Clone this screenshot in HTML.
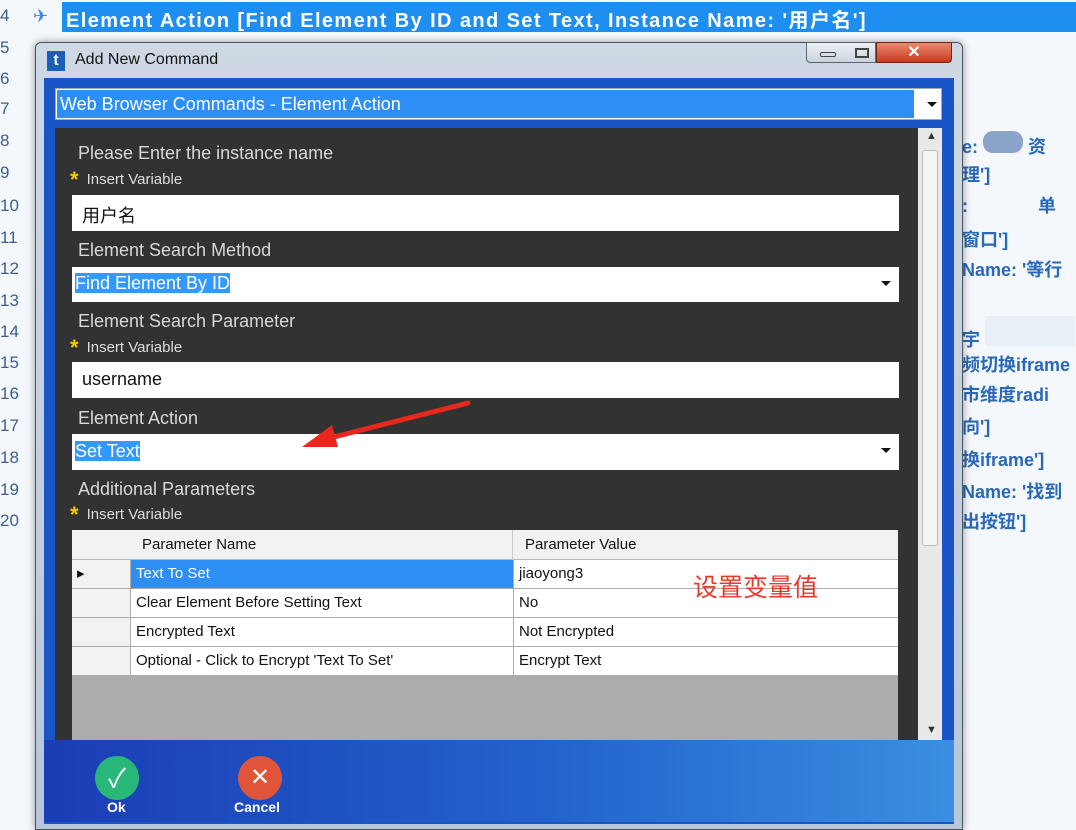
<!DOCTYPE html>
<html><head><meta charset="utf-8"><style>
*{margin:0;padding:0;box-sizing:border-box}
body{width:1076px;height:830px;overflow:hidden;background:#f4f7fb;font-family:"Liberation Sans","Noto Sans CJK SC",sans-serif;position:relative}
.a{position:absolute}
.ln{position:absolute;left:0;width:22px;font-size:17px;color:#3a5f8f}
.rt{position:absolute;left:962px;font-size:18px;color:#2a68b8;font-weight:bold;white-space:nowrap}
.lbl{position:absolute;left:78px;color:#d8d8d8;font-size:18px}
.iv{position:absolute;left:70px;color:#ddd;font-size:15px}
.iv b{color:#f5c800;font-size:22px;margin-right:8px;vertical-align:-3px}
.inp{position:absolute;left:72px;width:827px;background:#fff;font-size:18px;color:#111}
.sel{background:#3399ff;color:#fff}
.dd{position:absolute;right:8px;top:14px;border-left:5px solid transparent;border-right:5px solid transparent;border-top:5px solid #111}
.row{position:absolute;left:72px;width:826px;height:29px;font-size:15px;color:#111}
.row div{position:absolute;top:0;height:28px;line-height:28px;background:#fff;padding-left:5px}
</style></head><body>
<div class="a" style="left:62px;top:2px;width:1014px;height:30px;background:#1e8ff0"></div>
<div class="a" style="left:66px;top:4px;font-size:20px;font-weight:bold;color:#fff;white-space:nowrap;letter-spacing:1.4px">Element Action [Find Element By ID and Set Text, Instance Name: '用户名']</div>
<div class="a" style="left:33px;top:6px;font-size:18px;color:#3a8ad8">✈</div>
<div class="ln" style="top:6px">4</div><div class="ln" style="top:38px">5</div><div class="ln" style="top:69px">6</div><div class="ln" style="top:99px">7</div><div class="ln" style="top:131px">8</div><div class="ln" style="top:163px">9</div><div class="ln" style="top:196px">10</div><div class="ln" style="top:228px">11</div><div class="ln" style="top:259px">12</div><div class="ln" style="top:291px">13</div><div class="ln" style="top:322px">14</div><div class="ln" style="top:353px">15</div><div class="ln" style="top:384px">16</div><div class="ln" style="top:416px">17</div><div class="ln" style="top:448px">18</div><div class="ln" style="top:480px">19</div><div class="ln" style="top:511px">20</div>
<div class="rt" style="top:131px">e: <span style="display:inline-block;width:40px;height:22px;background:#8aa3c8;border-radius:10px"></span> 资</div>
<div class="rt" style="top:161px">理']</div>
<div class="rt" style="top:192px">: <span style="display:inline-block;width:60px"></span> 单</div>
<div class="rt" style="top:226px">窗口']</div>
<div class="rt" style="top:256px">Name: '等行</div>
<div class="rt" style="top:316px">宇 <span style="display:inline-block;width:90px;height:30px;background:#e9eff7"></span></div>
<div class="rt" style="top:351px">频切换iframe</div>
<div class="rt" style="top:381px">市维度radi</div>
<div class="rt" style="top:413px">向']</div>
<div class="rt" style="top:446px">换iframe']</div>
<div class="rt" style="top:478px">Name: '找到</div>
<div class="rt" style="top:508px">出按钮']</div>
<div class="a" style="left:35px;top:42px;width:928px;height:788px;background:linear-gradient(#cfd9e4,#b7c7d8);border:1px solid #4a5560;border-radius:6px 6px 0 0;box-shadow:0 0 8px rgba(0,0,0,.4)"></div>
<div class="a" style="left:47px;top:51px;width:18px;height:20px;background:#1a5fb8;color:#fff;font-weight:bold;font-size:16px;text-align:center;line-height:20px">t</div>
<div class="a" style="left:75px;top:51px;font-size:16px;color:#111">Add New Command</div>
<div class="a" style="left:806px;top:42px;width:70px;height:21px;background:linear-gradient(#eef2f6,#c9d3dd);border:1px solid #5a6470;border-radius:0 0 0 4px"></div>
<div class="a" style="left:820px;top:52px;width:16px;height:5px;border:1px solid #444;border-radius:2px"></div>
<div class="a" style="left:855px;top:48px;width:14px;height:10px;border:2px solid #444"></div>
<div class="a" style="left:876px;top:42px;width:76px;height:21px;background:linear-gradient(#e88a70,#c8391e);border:1px solid #6a2a1a;border-radius:0 0 4px 0;color:#fff;text-align:center;font-weight:bold;font-size:16px;line-height:19px">✕</div>
<div class="a" style="left:44px;top:78px;width:910px;height:746px;background:#1a55c8"></div>
<div class="a" style="left:55px;top:88px;width:887px;height:32px;background:#fff;border:1px solid #9ab"></div>
<div class="a" style="left:57px;top:90px;width:857px;height:28px;background:#2d8ff5;color:#fff;font-size:18px;line-height:28px;padding-left:3px">Web Browser Commands - Element Action</div>
<div class="dd" style="left:927px;top:102px;right:auto"></div>
<div class="a" style="left:55px;top:128px;width:863px;height:612px;background:#323232"></div>
<div class="a" style="left:918px;top:128px;width:24px;height:612px;background:#e8e8e8"></div>
<div class="a" style="left:922px;top:150px;width:16px;height:396px;background:#f4f4f4;border:1px solid #bbb;border-radius:3px"></div>
<div class="a" style="left:926px;top:130px;font-size:11px;color:#333">▲</div>
<div class="a" style="left:926px;top:724px;font-size:11px;color:#333">▼</div>
<div class="lbl" style="top:143px">Please Enter the instance name</div>
<div class="iv" style="top:167px"><b>*</b>Insert Variable</div>
<div class="inp" style="top:195px;height:36px;padding:7px 10px">用户名</div>
<div class="lbl" style="top:240px">Element Search Method</div>
<div class="inp" style="top:267px;height:35px;padding:6px 3px"><span class="sel">Find Element By ID</span><div class="dd"></div></div>
<div class="lbl" style="top:311px">Element Search Parameter</div>
<div class="iv" style="top:335px"><b>*</b>Insert Variable</div>
<div class="inp" style="top:362px;height:36px;padding:7px 10px">username</div>
<div class="lbl" style="top:408px">Element Action</div>
<div class="inp" style="top:434px;height:36px;padding:7px 3px"><span class="sel">Set Text</span><div class="dd"></div></div>
<div class="lbl" style="top:479px">Additional Parameters</div>
<div class="iv" style="top:502px"><b>*</b>Insert Variable</div>
<div class="a" style="left:72px;top:530px;width:826px;height:210px;background:#acacac"></div>
<div class="a" style="left:72px;top:530px;width:826px;height:30px;background:#f2f2f2;border-bottom:1px solid #bbb;font-size:15px;color:#111"><span class="a" style="left:70px;top:6px">Parameter Name</span><span class="a" style="left:453px;top:6px">Parameter Value</span><span class="a" style="left:440px;top:0;width:1px;height:30px;background:#ccc"></span></div>
<div class="row" style="top:560px"><div style="left:0;width:58px;background:#f2f2f2">▸</div><div style="left:59px;width:382px;background:#2d8ff5;color:#fff">Text To Set</div><div style="left:442px;width:384px">jiaoyong3</div></div>
<div class="row" style="top:589px"><div style="left:0;width:58px;background:#f2f2f2"></div><div style="left:59px;width:382px">Clear Element Before Setting Text</div><div style="left:442px;width:384px">No</div></div>
<div class="row" style="top:618px"><div style="left:0;width:58px;background:#f2f2f2"></div><div style="left:59px;width:382px">Encrypted Text</div><div style="left:442px;width:384px">Not Encrypted</div></div>
<div class="row" style="top:647px"><div style="left:0;width:58px;background:#f2f2f2"></div><div style="left:59px;width:382px">Optional - Click to Encrypt 'Text To Set'</div><div style="left:442px;width:384px">Encrypt Text</div></div>
<div class="a" style="left:693px;top:568px;font-size:25px;color:#e8382a;font-family:'Noto Sans CJK SC',sans-serif">设置变量值</div>
<svg class="a" style="left:0;top:0" width="1076" height="830"><path d="M468 403 L330 438" stroke="#e8281e" stroke-width="5" stroke-linecap="round"/><path d="M302 447 L332 425 L338 447 Z" fill="#e8281e"/></svg>
<div class="a" style="left:44px;top:740px;width:910px;height:82px;background:linear-gradient(90deg,#1b3db5,#2262cc 55%,#3a8fe0)"></div>
<div class="a" style="left:95px;top:756px;width:44px;height:44px;border-radius:50%;background:#2ab87a;color:#fff;font-size:26px;text-align:center;line-height:44px">✓</div>
<div class="a" style="left:107px;top:799px;color:#fff;font-weight:bold;font-size:14px">Ok</div>
<div class="a" style="left:238px;top:756px;width:44px;height:44px;border-radius:50%;background:#e0553a;color:#fff;font-size:24px;text-align:center;line-height:44px">✕</div>
<div class="a" style="left:234px;top:799px;color:#fff;font-weight:bold;font-size:14px">Cancel</div>
</body></html>
